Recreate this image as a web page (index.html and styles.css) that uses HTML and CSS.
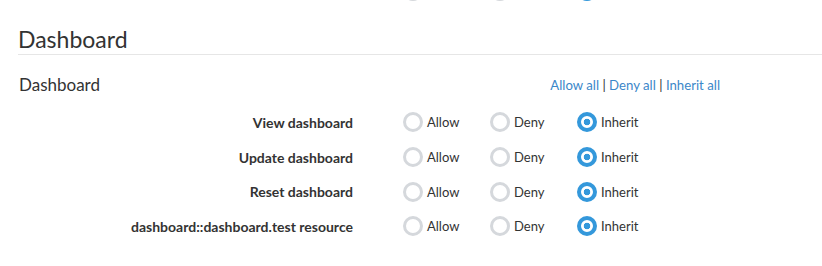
FILE: index.html
```html
<!DOCTYPE html>
<html lang="en">
<head>
  <meta charset="UTF-8">
  <title>Permissions</title>
  <link rel="stylesheet" href="styles.css">
</head>
<body>
  <div class="page">
    <!-- tail of the previous section, only its radios peek in -->
    <div class="perm-row perm-row-prev">
      <div class="perm-label"></div>
      <div class="perm-options">
        <label class="opt"><input type="radio" name="prev"></label>
        <label class="opt"><input type="radio" name="prev"></label>
        <label class="opt"><input type="radio" name="prev" checked></label>
      </div>
    </div>

    <h3 class="module-title">Dashboard</h3>

    <div class="section-head">
      <h4 class="section-title">Dashboard</h4>
      <div class="bulk-links">
        <a href="#">Allow all</a> | <a href="#">Deny all</a> | <a href="#">Inherit all</a>
      </div>
    </div>

    <div class="perm-row">
      <div class="perm-label">View dashboard</div>
      <div class="perm-options">
        <label class="opt"><input type="radio" name="view"><span>Allow</span></label>
        <label class="opt"><input type="radio" name="view"><span>Deny</span></label>
        <label class="opt"><input type="radio" name="view" checked><span>Inherit</span></label>
      </div>
    </div>
    <div class="perm-row">
      <div class="perm-label">Update dashboard</div>
      <div class="perm-options">
        <label class="opt"><input type="radio" name="update"><span>Allow</span></label>
        <label class="opt"><input type="radio" name="update"><span>Deny</span></label>
        <label class="opt"><input type="radio" name="update" checked><span>Inherit</span></label>
      </div>
    </div>
    <div class="perm-row">
      <div class="perm-label">Reset dashboard</div>
      <div class="perm-options">
        <label class="opt"><input type="radio" name="reset"><span>Allow</span></label>
        <label class="opt"><input type="radio" name="reset"><span>Deny</span></label>
        <label class="opt"><input type="radio" name="reset" checked><span>Inherit</span></label>
      </div>
    </div>
    <div class="perm-row">
      <div class="perm-label">dashboard::dashboard.test resource</div>
      <div class="perm-options">
        <label class="opt"><input type="radio" name="test"><span>Allow</span></label>
        <label class="opt"><input type="radio" name="test"><span>Deny</span></label>
        <label class="opt"><input type="radio" name="test" checked><span>Inherit</span></label>
      </div>
    </div>
  </div>
</body>
</html>
```

FILE: styles.css
```css
:root {
  --text: #333;
  --link: #3b87c9;
  --radio-off: #d5d8dc;
  --radio-on: #3498db;
  --rule: #e6e6e6;
}
body {
  margin: 0;
  background: #fff;
  color: var(--text);
  font-family: 'Lato', 'Liberation Sans', sans-serif;
  overflow: hidden;
}
.page {
  padding-left: 18px;
}
.module-title {
  margin: 0;
  padding-top: 16px;
  font-size: 23px;
  font-weight: 400;
  line-height: 30px;
  border-bottom: 1px solid var(--rule);
}
.section-head {
  width: 702px;
  margin-top: 18px;
  display: flex;
  justify-content: space-between;
  align-items: center;
  height: 24px;
  margin-bottom: 8px;
}
.section-title {
  margin: 0 0 0 1px;
  font-size: 17px;
  font-weight: 400;
  line-height: 24px;
}
.bulk-links {
  font-size: 13.2px;
  line-height: 24px;
}
.bulk-links a {
  color: var(--link);
  text-decoration: none;
}
.perm-row {
  display: flex;
  align-items: center;
  height: 34.7px;
}
.perm-row-prev {
  margin-top: -27px;
  height: 35px;
}
.perm-label {
  width: 335px;
  text-align: right;
  font-size: 14px;
  font-weight: 700;
}
.perm-options {
  display: flex;
  align-items: center;
  margin-left: 50px;
}
.opt {
  display: flex;
  align-items: center;
  gap: 4px;
  width: 87px;
  font-size: 13px;
  cursor: pointer;
}
.opt input {
  appearance: none;
  -webkit-appearance: none;
  margin: 0;
  flex: none;
  width: 20px;
  height: 20px;
  border-radius: 50%;
  border: 3px solid var(--radio-off);
  background: #fff;
  box-sizing: border-box;
}
.opt input:checked {
  border: 4px solid var(--radio-on);
  background: radial-gradient(circle, var(--radio-on) 0, var(--radio-on) 3px, #fff 3.6px);
}
```
